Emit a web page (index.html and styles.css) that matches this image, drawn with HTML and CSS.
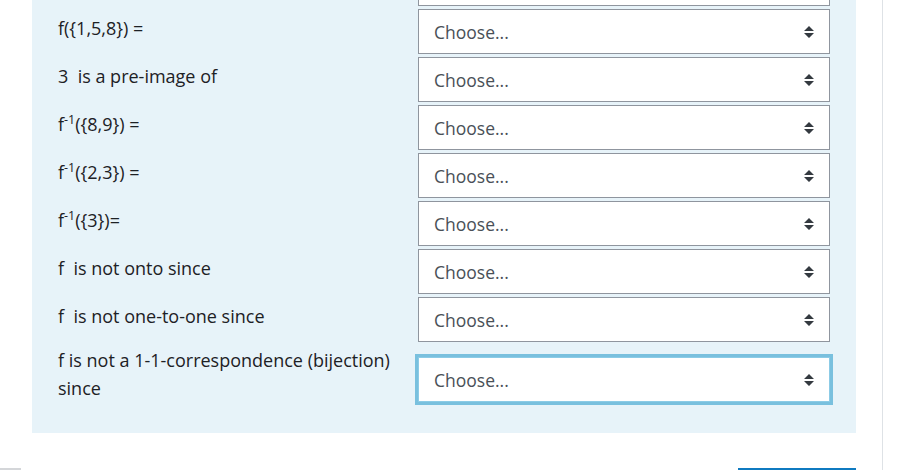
FILE: index.html
```html
<!DOCTYPE html>
<html>
<head>
<meta charset="utf-8">
<link rel="stylesheet" href="styles.css">
</head>
<body>
<div class="page">
  <div class="content">
    <div class="panel">
      <div class="row">
        <div class="label"></div>
        <div class="select"></div>
      </div>
      <div class="row">
        <div class="label">f({1,5,8}) =</div>
        <div class="select"><span class="value">Choose...</span><svg class="arrow" viewBox="0 0 10 12"><path d="M0 5 L5 0 L10 5 Z M0 7 L10 7 L5 12 Z"/></svg></div>
      </div>
      <div class="row">
        <div class="label">3&nbsp; is a pre-image of</div>
        <div class="select"><span class="value">Choose...</span><svg class="arrow" viewBox="0 0 10 12"><path d="M0 5 L5 0 L10 5 Z M0 7 L10 7 L5 12 Z"/></svg></div>
      </div>
      <div class="row">
        <div class="label">f<sup>-1</sup>({8,9}) =</div>
        <div class="select"><span class="value">Choose...</span><svg class="arrow" viewBox="0 0 10 12"><path d="M0 5 L5 0 L10 5 Z M0 7 L10 7 L5 12 Z"/></svg></div>
      </div>
      <div class="row">
        <div class="label">f<sup>-1</sup>({2,3}) =</div>
        <div class="select"><span class="value">Choose...</span><svg class="arrow" viewBox="0 0 10 12"><path d="M0 5 L5 0 L10 5 Z M0 7 L10 7 L5 12 Z"/></svg></div>
      </div>
      <div class="row">
        <div class="label">f<sup>-1</sup>({3})=</div>
        <div class="select"><span class="value">Choose...</span><svg class="arrow" viewBox="0 0 10 12"><path d="M0 5 L5 0 L10 5 Z M0 7 L10 7 L5 12 Z"/></svg></div>
      </div>
      <div class="row">
        <div class="label">f&nbsp; is not onto since</div>
        <div class="select"><span class="value">Choose...</span><svg class="arrow" viewBox="0 0 10 12"><path d="M0 5 L5 0 L10 5 Z M0 7 L10 7 L5 12 Z"/></svg></div>
      </div>
      <div class="row">
        <div class="label">f&nbsp; is not one-to-one since</div>
        <div class="select"><span class="value">Choose...</span><svg class="arrow" viewBox="0 0 10 12"><path d="M0 5 L5 0 L10 5 Z M0 7 L10 7 L5 12 Z"/></svg></div>
      </div>
      <div class="row row-last">
        <div class="label">f is not a 1-1-correspondence (bijection) since</div>
        <div class="select focused"><span class="value">Choose...</span><svg class="arrow" viewBox="0 0 10 12"><path d="M0 5 L5 0 L10 5 Z M0 7 L10 7 L5 12 Z"/></svg></div>
      </div>
    </div>
    <div class="footer">
      <div class="grey-tab"></div>
      <div class="blue-btn"></div>
    </div>
  </div>
  <div class="sidebar-line"></div>
</div>
</body>
</html>
```
FILE: styles.css
```css
html, body {
  margin: 0;
  padding: 0;
  background: #ffffff;
  overflow: hidden;
}
body {
  font-family: "Open Sans", "Noto Sans", sans-serif;
  font-size: 18px;
  color: #1d2125;
  height: 470px;
}
.page {
  display: flex;
  height: 470px;
}
.content {
  width: 882px;
  display: flex;
  flex-direction: column;
}
.panel {
  margin: -42px 26px 0 32px;
  background: #e7f3f9;
  padding: 0 26px 29px 26px;
  display: flex;
  flex-direction: column;
}
.row {
  display: flex;
  align-items: flex-start;
  height: 48px;
}
.label {
  width: 360px;
  padding-top: 8px;
  line-height: 28px;
  white-space: pre-wrap;
}
.label sup {
  font-size: 12.5px;
  line-height: 0;
  vertical-align: 7px;
}
.select {
  margin-top: 3px;
  box-sizing: border-box;
  width: 412px;
  height: 45px;
  border: 1px solid #8f959e;
  background: #ffffff;
  display: flex;
  align-items: center;
  justify-content: space-between;
  padding: 0 15px 0 15px;
  color: #495057;
}
.value {
  font-size: 17.5px;
}
.arrow {
  width: 10px;
  height: 12px;
  fill: #343a40;
}
.row-last {
  height: 62px;
}
.row-last .label {
  padding-top: 4px;
}
.row-last .select {
  margin-top: 15px;
  border-color: #8ccbe6;
  box-shadow: 0 0 0 3px #79c0de;
}
.footer {
  margin-top: 35px;
  height: 10px;
  display: flex;
  justify-content: space-between;
  padding-right: 26px;
}
.grey-tab {
  width: 21px;
  height: 4px;
  background: #d4d6d9;
}
.blue-btn {
  width: 118px;
  height: 10px;
  background: #0f7ac0;
}
.sidebar-line {
  width: 1px;
  height: 470px;
  background: #dee2e6;
}
```
